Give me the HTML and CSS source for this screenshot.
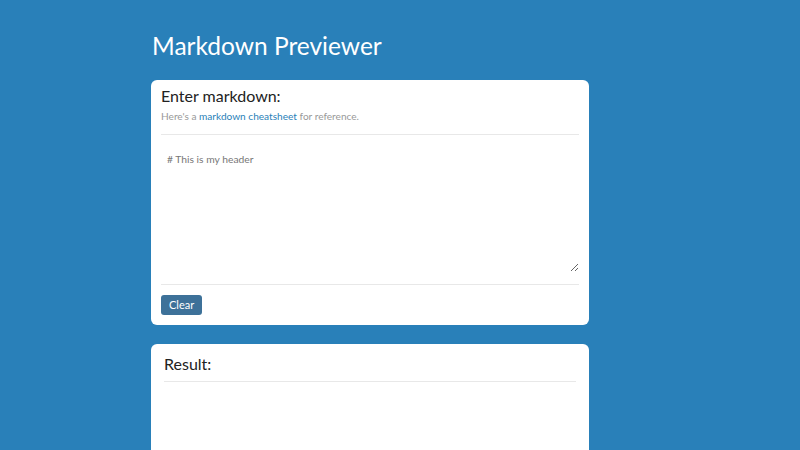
FILE: index.html
```html
<!DOCTYPE html>
<html lang="en">
<head>
    <meta charset="UTF-8">
    <meta name="viewport" content="width=device-width, initial-scale=1.0">
    <title>Markdown Previewer</title>
    <link rel="stylesheet" href="styles.css">
</head>
<body>
    <div class="app">
        <h1 class="app-title">Markdown Previewer</h1>

        <div class="panel editor-panel">
            <div class="panel-heading">
                <h2 class="panel-title">Enter markdown:</h2>
                <p class="panel-hint">Here's a <a href="#">markdown cheatsheet</a> for reference.</p>
            </div>
            <textarea class="editor" id="editor" placeholder="# This is my header"></textarea>
            <div class="panel-footer">
                <button class="btn-clear" id="clear-btn">Clear</button>
            </div>
        </div>

        <div class="panel result-panel">
            <div class="panel-heading result-heading">
                <h2 class="panel-title">Result:</h2>
            </div>
            <div class="result" id="result"></div>
        </div>
    </div>
</body>
</html>
```

FILE: styles.css
```css
body {
    margin: 0;
    padding: 0;
    background-color: #2980b9;
    font-family: Lato, "Open Sans", sans-serif;
    color: #333;
}

.app {
    width: 438px;
    margin-left: 151px;
    padding-top: 28px;
}

.app-title {
    margin: 0 0 17px 1px;
    font-size: 24.5px;
    font-weight: 400;
    line-height: 35px;
    color: #fff;
}

.panel {
    background-color: #fff;
    border-radius: 6px;
    padding: 0 10px 10px;
    margin-bottom: 19px;
}

.panel-heading {
    padding-top: 5px;
    border-bottom: 1px solid #e8e8e8;
}

.panel-title {
    margin: 0;
    font-size: 16px;
    font-weight: 400;
    line-height: 22px;
    color: #222;
}

.panel-hint {
    margin: 0;
    padding-bottom: 9px;
    font-size: 10.1px;
    line-height: 18px;
    color: #999;
}

.panel-hint a {
    color: #2a7fb8;
    text-decoration: none;
}

.editor {
    display: block;
    box-sizing: border-box;
    width: 100%;
    height: 137px;
    margin: 0 0 12px;
    padding: 18px 6px 16px;
    border: none;
    outline: none;
    resize: vertical;
    font-family: inherit;
    font-size: 10.3px;
    color: #555;
}

.editor::placeholder {
    color: #777;
}

.panel-footer {
    display: flex;
    border-top: 1px solid #e8e8e8;
    padding-top: 10px;
}

.btn-clear {
    height: 20px;
    padding: 0 8px;
    border: none;
    border-radius: 3px;
    background-color: #3d7199;
    color: #fff;
    font-family: inherit;
    font-size: 11px;
    line-height: 20px;
    cursor: pointer;
}

.btn-clear:hover {
    background-color: #335f80;
}

.result-panel {
    padding: 0 13px;
    min-height: 120px;
}

.result-heading {
    padding-top: 9px;
    padding-bottom: 6px;
}
```
